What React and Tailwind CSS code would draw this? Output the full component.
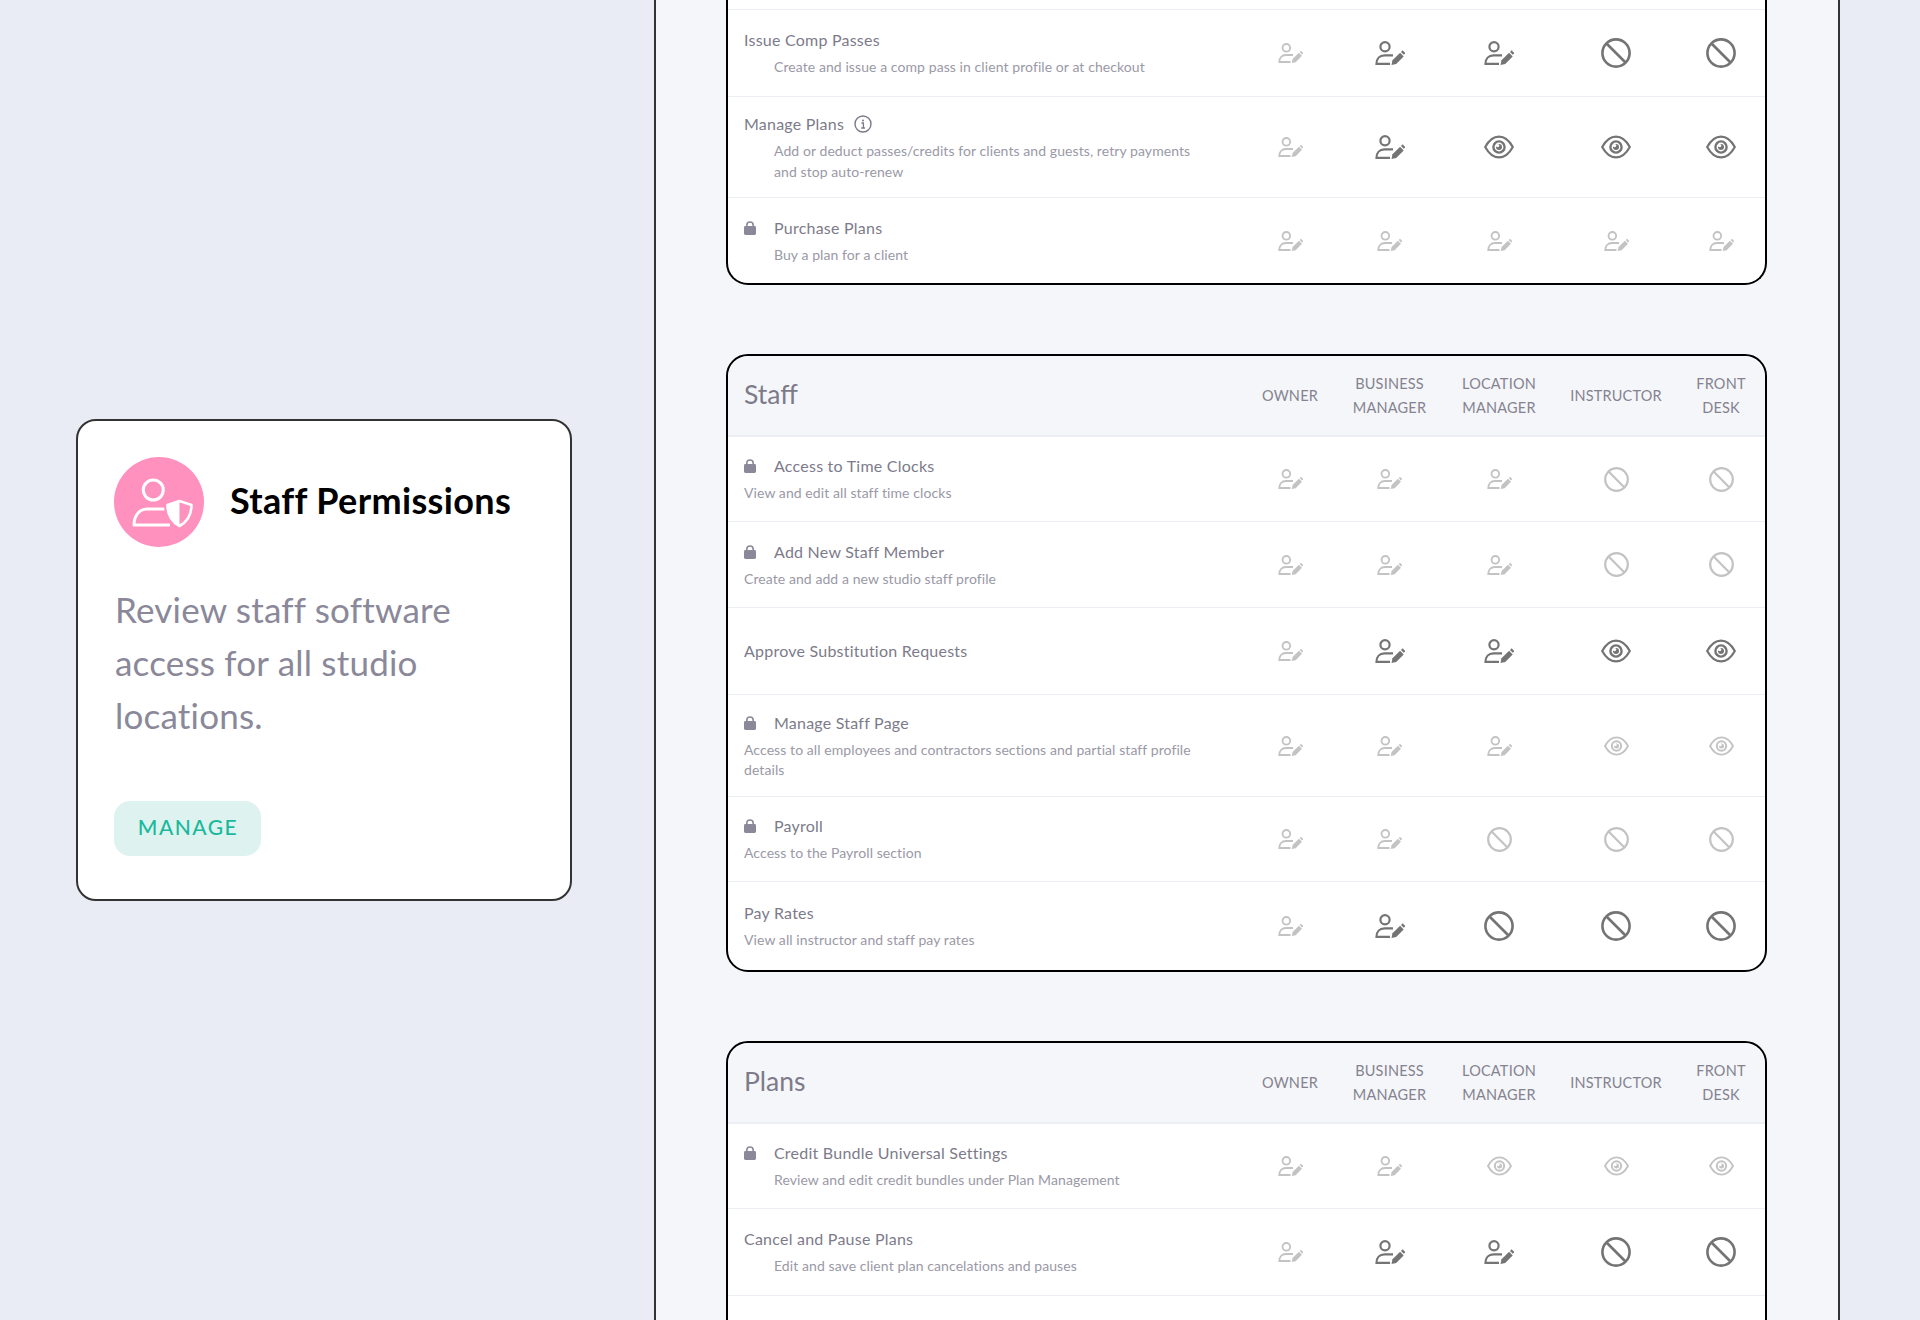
const FONT = "font-['Lato',sans-serif]";

const columns = ["OWNER", "BUSINESS MANAGER", "LOCATION MANAGER", "INSTRUCTOR", "FRONT DESK"];

const rowGrid = "grid grid-cols-[516px_92px_107px_112px_122px_88px] items-center";

function PersonEdit({ faint }) {
  return (
    <svg
      viewBox="0 0 30 24"
      fill="none"
      className={faint ? "w-[25px] h-[20px] text-[#c3c3c3]" : "w-[30px] h-[24px] text-[#747474]"}
    >
      <circle cx="10" cy="5.8" r="4.6" stroke="currentColor" strokeWidth="2.2" />
      <path d="M18 14.4H9.5C4.5 14.4 1.5 18 1.5 22.8H15" stroke="currentColor" strokeWidth="2.2" />
      <path d="M16.5 24l1-4.8 7.6-7.4 3.6 3.6L21.2 23z" fill="currentColor" />
      <path d="M26 10.9l1.6-1.6 2.8 2.8-1.6 1.6z" fill="currentColor" />
    </svg>
  );
}

function Eye({ faint }) {
  return (
    <svg
      viewBox="0 0 30 24"
      fill="none"
      className={faint ? "w-[25px] h-[20px] text-[#c3c3c3]" : "w-[30px] h-[24px] text-[#747474]"}
    >
      <path
        d="M1.2 12C5 5 10 1.6 15 1.6S25 5 28.8 12C25 19 20 22.4 15 22.4S5 19 1.2 12Z"
        stroke="currentColor"
        strokeWidth="2.2"
      />
      <circle cx="15" cy="12" r="5.6" stroke="currentColor" strokeWidth="2.4" />
      <circle cx="15" cy="12" r="3" fill="currentColor" />
      <circle cx="13.6" cy="10.6" r="1.7" fill="white" />
    </svg>
  );
}

function Ban({ faint }) {
  return (
    <svg
      viewBox="0 0 30 30"
      fill="none"
      className={faint ? "w-[25px] h-[25px] text-[#c3c3c3]" : "w-[30px] h-[30px] text-[#747474]"}
    >
      <circle cx="15" cy="15" r="13.6" stroke="currentColor" strokeWidth="2.6" />
      <path d="M5.5 5.5l19 19" stroke="currentColor" strokeWidth="2.6" />
    </svg>
  );
}

function Lock() {
  return (
    <svg viewBox="0 0 12 14" className="w-3 h-3.5 text-[#8a8899]" fill="none">
      <path d="M2.8 6V4.2a3.2 3.2 0 0 1 6.4 0V6" stroke="currentColor" strokeWidth="1.6" />
      <rect x="0" y="5" width="12" height="9" rx="1.4" fill="currentColor" />
    </svg>
  );
}

function Info() {
  return (
    <svg viewBox="0 0 18 18" className="w-[18px] h-[18px] text-[#7d7b8a]" fill="none">
      <circle cx="9" cy="9" r="8" stroke="currentColor" strokeWidth="1.4" />
      <circle cx="9" cy="5.4" r="1" fill="currentColor" />
      <path d="M7.4 8h2v5M7.2 13h3.8" stroke="currentColor" strokeWidth="1.3" />
    </svg>
  );
}

function StaffShield() {
  return (
    <svg viewBox="0 0 70 54" fill="none" className="w-[70px] h-[54px]">
      <circle cx="29.3" cy="15" r="10" stroke="white" strokeWidth="3" />
      <path d="M43 34H23C15 34 10 41 10 50H46" stroke="white" strokeWidth="3" strokeLinejoin="round" />
      <path
        d="M55.5 26l12 4c0 9-3 16-12 21c-9-5-12-12-12-21z"
        fill="#ff91bf"
        stroke="#ff91bf"
        strokeWidth="7"
        strokeLinejoin="round"
      />
      <path
        d="M55.5 26l12 4c0 9-3 16-12 21c-9-5-12-12-12-21z"
        fill="#ff91bf"
        stroke="white"
        strokeWidth="2.6"
        strokeLinejoin="round"
      />
      <path d="M55.5 26l-12 4c0 9 3 16 12 21z" fill="white" />
    </svg>
  );
}

function Cell({ type }) {
  const faint = type === type.toLowerCase();
  const kind = type.toLowerCase();
  return (
    <div className="flex items-center justify-center">
      {kind === "e" && <PersonEdit faint={faint} />}
      {kind === "v" && <Eye faint={faint} />}
      {kind === "x" && <Ban faint={faint} />}
    </div>
  );
}

function Row({ title, desc, lock, info, indent, cells, height }) {
  return (
    <div className={`${rowGrid} border-t border-[#eceef3] ${height}`}>
      <div className="pl-4 pr-[44px]">
        <div className="flex items-center text-[16px] tracking-[0.23px] leading-6 text-[#7d7b8a]">
          {lock && (
            <span className="w-[30px] shrink-0">
              <Lock />
            </span>
          )}
          <span>{title}</span>
          {info && (
            <span className="ml-2.5">
              <Info />
            </span>
          )}
        </div>
        {desc && (
          <p
            className={`mt-[5px] text-[14px] tracking-[0.08px] leading-[20.5px] text-[#9a99a6] ${indent ? "pl-[30px]" : ""}`}
          >
            {desc}
          </p>
        )}
      </div>
      {cells.split("").map((c, i) => (
        <Cell key={i} type={c} />
      ))}
    </div>
  );
}

function CardHeader({ title }) {
  return (
    <div className={`${rowGrid} h-[80px] bg-[#f4f6fa] border-b border-[#eceef3] rounded-t-[22px]`}>
      <div className="pl-4 pb-px text-[26.5px] text-[#7d7b8a]">{title}</div>
      {columns.map((c) => (
        <div key={c} className="text-center text-[14.5px] leading-6 text-[#85838f] tracking-[0.2px] px-2">
          {c}
        </div>
      ))}
    </div>
  );
}

const passRows = [
  { title: "Issue Comp Passes", desc: "Create and issue a comp pass in client profile or at checkout", indent: true, cells: "eEEXX", height: "h-[87px]" },
  { title: "Manage Plans", info: true, desc: "Add or deduct passes/credits for clients and guests, retry payments and stop auto-renew", indent: true, cells: "eEVVV", height: "h-[101px]" },
  { title: "Purchase Plans", lock: true, desc: "Buy a plan for a client", indent: true, cells: "eeeee", height: "h-[86px]" },
];

const staffRows = [
  { title: "Access to Time Clocks", lock: true, desc: "View and edit all staff time clocks", cells: "eeexx", height: "h-[85px]" },
  { title: "Add New Staff Member", lock: true, desc: "Create and add a new studio staff profile", cells: "eeexx", height: "h-[86px]" },
  { title: "Approve Substitution Requests", cells: "eEEVV", height: "h-[87px]" },
  { title: "Manage Staff Page", lock: true, desc: "Access to all employees and contractors sections and partial staff profile details", cells: "eeevv", height: "h-[102px]" },
  { title: "Payroll", lock: true, desc: "Access to the Payroll section", cells: "eexxx", height: "h-[85px]" },
  { title: "Pay Rates", desc: "View all instructor and staff pay rates", cells: "eEXXX", height: "h-[89px]" },
];

const planRows = [
  { title: "Credit Bundle Universal Settings", lock: true, desc: "Review and edit credit bundles under Plan Management", indent: true, cells: "eevvv", height: "h-[85px]" },
  { title: "Cancel and Pause Plans", desc: "Edit and save client plan cancelations and pauses", indent: true, cells: "eEEXX", height: "h-[87px]" },
  { title: "", cells: "", height: "h-[86px]" },
];

export default function App() {
  return (
    <div className={`${FONT} h-[1320px] w-[1920px] overflow-hidden flex bg-[#e9ecf4]`}>
      <div className="w-[654px] shrink-0 flex items-center pl-[76px]">
        <div className="w-[496px] h-[482px] bg-white border-2 border-[#333333] rounded-[20px] pt-[36px] px-[36px]">
          <div className="flex items-center gap-[26px]">
            <div className="w-[90px] h-[90px] rounded-full bg-[#ff91bf] flex items-center justify-center">
              <StaffShield />
            </div>
            <h1 className="pb-[5px] text-[36px] font-bold text-black tracking-[0.35px] whitespace-nowrap">Staff Permissions</h1>
          </div>
          <p className="mt-[36px] ml-px text-[35px] tracking-[0.2px] leading-[53px] text-[#8a8899] w-[380px]">
            Review staff software access for all studio locations.
          </p>
          <button className="mt-[59px] w-[147px] h-[55px] pl-px pb-[3px] rounded-[16px] bg-[#def3ef] text-[#1ab99d] text-[21px] tracking-[1.5px] font-medium">
            MANAGE
          </button>
        </div>
      </div>

      <div className="w-[1186px] shrink-0 bg-[#f4f6fa] border-x-2 border-[#333333] pl-[70px] pr-[71px]">
        <div className="bg-white border-2 border-t-0 border-black rounded-b-[22px] pt-[9px] overflow-hidden">
          {passRows.map((r) => (
            <Row key={r.title} {...r} />
          ))}
        </div>

        <div className="mt-[69px] bg-white border-2 border-black rounded-[22px] overflow-hidden">
          <CardHeader title="Staff" />
          {staffRows.map((r) => (
            <Row key={r.title} {...r} />
          ))}
        </div>

        <div className="mt-[69px] bg-white border-2 border-black rounded-[22px] overflow-hidden">
          <CardHeader title="Plans" />
          {planRows.map((r, i) => (
            <Row key={i} {...r} />
          ))}
        </div>
      </div>
    </div>
  );
}
